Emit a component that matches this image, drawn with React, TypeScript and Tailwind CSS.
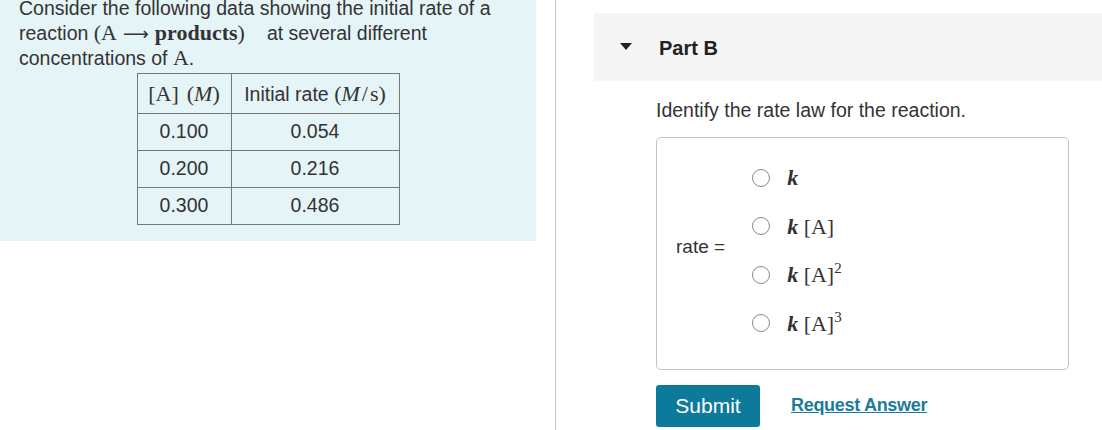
import React from "react";

const sans = { fontFamily: '"Liberation Sans", Arial, sans-serif' };
const serif = { fontFamily: '"Liberation Serif", "Times New Roman", serif' };

function M({ children, italic = false, size = "text-[22px]" }: { children: React.ReactNode; italic?: boolean; size?: string }) {
  return (
    <span style={serif} className={`${size} ${italic ? "italic" : ""}`}>
      {children}
    </span>
  );
}

function Radio() {
  return <span className="inline-block w-[18px] h-[18px] rounded-full border border-[#8a8a8a] bg-white" />;
}

const rows = [
  ["0.100", "0.054"],
  ["0.200", "0.216"],
  ["0.300", "0.486"],
];

export default function App() {
  return (
    <div style={sans} className="w-[1102px] h-[430px] overflow-hidden bg-white text-[#333] flex">
      {/* left: problem intro */}
      <div className="w-[555px] shrink-0">
        <div className="w-[536px] h-[241px] bg-[#e5f4f6] overflow-hidden">
          <div className="px-[19px] -mt-[4px] text-[19.5px] leading-[24.5px] whitespace-nowrap">
            Consider the following data showing the initial rate of a
            <br />
            reaction{" "}
            <M>
              (A
              <span style={{ fontFamily: '"DejaVu Sans", sans-serif' }} className="text-[18px] mx-[6px]">
                ⟶
              </span>
              <span className="font-bold">products</span>)
            </M>
            <span className="ml-[22px]">at several different</span>
            <br />
            concentrations of <M>A</M>.
          </div>
          <table className="mx-auto mt-[2px] table-fixed w-[262px] border-collapse border border-[#333] text-[19.5px]">
            <thead>
              <tr className="h-[40px]">
                <th className="w-[94px] border border-[#777] font-normal px-0 whitespace-nowrap">
                  <M>
                    [A]<span className="ml-[8px]">(</span>
                    <i>M</i>)
                  </M>
                </th>
                <th className="w-[168px] border border-[#777] font-normal px-0 whitespace-nowrap">
                  Initial rate{" "}
                  <M>
                    (<i>M</i>
                    <span className="mx-[2px]">/</span>s)
                  </M>
                </th>
              </tr>
            </thead>
            <tbody>
              {rows.map((r) => (
                <tr key={r[0]} className="h-[37px]">
                  <td className="border border-[#777] text-center">{r[0]}</td>
                  <td className="border border-[#777] text-center">{r[1]}</td>
                </tr>
              ))}
            </tbody>
          </table>
        </div>
      </div>

      {/* right: Part B */}
      <div className="flex-1 border-l border-[#c8c8c8] pl-[38px] pt-[13px]">
        <div className="h-[68px] bg-[#f5f5f5] flex items-center pl-[26px]">
          <svg width="12" height="7" viewBox="0 0 12 7" className="mt-[-1px]">
            <path d="M0 0H12L6 7Z" fill="#222" />
          </svg>
          <span className="ml-[27px] text-[20px] font-bold text-[#222] mt-[1px]">Part B</span>
        </div>
        <div className="pl-[62px]">
          <p className="mt-[17px] text-[19.5px] leading-[24px]">Identify the rate law for the reaction.</p>
          <div className="mt-[15px] w-[413px] h-[233px] border border-[#c4c4c4] rounded-[5px] flex items-center pl-[19px]">
            <span className="text-[19px] mt-[-12px]">rate =</span>
            <div className="ml-[27px] flex flex-col gap-[22px] mt-[-6px]">
              <label className="flex items-center gap-[17px] h-[26.5px]">
                <Radio />
                <M italic>
                  <span className="font-bold">k</span>
                </M>
              </label>
              <label className="flex items-center gap-[17px] h-[26.5px]">
                <Radio />
                <M>
                  <i className="font-bold">k</i> [A]
                </M>
              </label>
              <label className="flex items-center gap-[17px] h-[26.5px]">
                <Radio />
                <M>
                  <i className="font-bold">k</i> [A]<sup className="text-[15px] -top-[0.6em]">2</sup>
                </M>
              </label>
              <label className="flex items-center gap-[17px] h-[26.5px]">
                <Radio />
                <M>
                  <i className="font-bold">k</i> [A]<sup className="text-[15px] -top-[0.6em]">3</sup>
                </M>
              </label>
            </div>
          </div>
          <div className="mt-[15px] flex items-center">
            <button className="w-[104px] h-[42px] rounded-[3px] bg-[#0e7a9b] text-white text-[21px]">Submit</button>
            <a className="ml-[31px] text-[18px] font-bold text-[#1b7b9b] underline tracking-[-0.3px] -mt-[2px]">Request Answer</a>
          </div>
        </div>
      </div>
    </div>
  );
}
